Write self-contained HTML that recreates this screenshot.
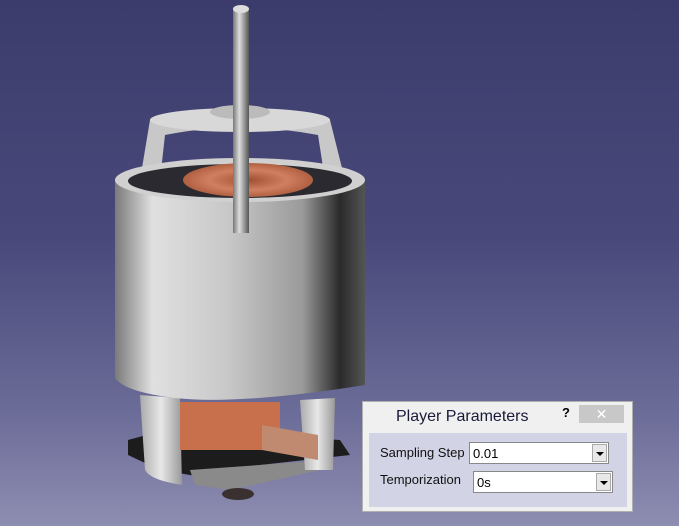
<!DOCTYPE html>
<html><head><style>
body{margin:0;width:679px;height:526px;overflow:hidden;background:linear-gradient(#3c3c6c 0%,#48487a 45%,#6e6e9a 80%,#8e8eb2 100%);font-family:"Liberation Sans",sans-serif;position:relative}
.dlg{position:absolute;left:362px;top:401px;width:271px;height:111px;background:#f0f0f0;border:1px solid #b0b0b0;box-sizing:border-box}
.title{position:absolute;left:33px;top:6px;font-size:16px;color:#1a1a3a}
.q{position:absolute;left:199px;top:3px;font-size:13px;font-weight:bold}
.x{position:absolute;left:216px;top:3px;width:45px;height:18px;background:#c8c8c8;color:#fff;text-align:center;font-size:14px;line-height:18px}
.body{position:absolute;left:6px;top:31px;width:258px;height:74px;background:#d3d3e6}
.lbl{position:absolute;font-size:13px;color:#111}
.cb{position:absolute;height:22px;background:#fff;border:1px solid #888;box-sizing:border-box;font-size:13px;padding:3px 0 0 3px}
.cb i{position:absolute;right:1px;top:1px;width:15px;height:18px;background:#e8e8e8;border:1px solid #aaa;box-sizing:border-box}
.cb i:after{content:"";position:absolute;left:3px;top:7px;border:4px solid transparent;border-top:4px solid #000}
</style></head><body>
<svg width="679" height="526" style="position:absolute;left:0;top:0">
<defs>
<linearGradient id="cyl" x1="0" x2="1"><stop offset="0" stop-color="#7a7a7a"/><stop offset=".15" stop-color="#e0e0e0"/><stop offset=".45" stop-color="#c8c8c8"/><stop offset=".75" stop-color="#9a9a9a"/><stop offset=".9" stop-color="#2a2a2a"/><stop offset="1" stop-color="#555"/></linearGradient>
<linearGradient id="lc" x1="0" x2="1"><stop offset="0" stop-color="#aaa"/><stop offset=".5" stop-color="#e8e8e8"/><stop offset="1" stop-color="#999"/></linearGradient>
<linearGradient id="sh" x1="0" x2="1"><stop offset="0" stop-color="#777"/><stop offset=".4" stop-color="#ddd"/><stop offset="1" stop-color="#555"/></linearGradient>
<radialGradient id="cu"><stop offset="0" stop-color="#a05030"/><stop offset=".6" stop-color="#d08060"/><stop offset="1" stop-color="#b06040"/></radialGradient>
</defs>
<!-- lower -->
<path d="M128 440 L165 430 L340 440 L350 455 L260 465 L220 480 L160 470 L128 455 Z" fill="#1c1c1c"/>
<path d="M190 470 L330 460 L320 470 L230 490 L195 485 Z" fill="#8a8a8a"/>
<ellipse cx="238" cy="494" rx="16" ry="6" fill="#3a3030"/>
<path d="M140 395 L180 398 L182 485 Q150 480 145 470 Z" fill="url(#lc)"/>
<path d="M300 400 L335 398 L333 470 L305 470 Z" fill="url(#lc)"/>
<rect x="180" y="402" width="100" height="48" fill="#c8704c"/>
<path d="M262 425 L318 435 L318 460 L262 450 Z" fill="#c08a70"/>
<!-- brackets -->
<path d="M140 180 L150 120 Q240 100 330 120 L345 180 L325 180 L318 135 Q240 120 165 135 L160 180 Z" fill="#c8c8c8"/>
<ellipse cx="240" cy="120" rx="90" ry="12" fill="#d8d8d8"/>
<ellipse cx="240" cy="112" rx="30" ry="7" fill="#bbb"/>
<!-- main cylinder -->
<path d="M115 180 L115 378 Q125 392 175 398 Q240 405 365 385 L365 180 Z" fill="url(#cyl)"/>
<ellipse cx="240" cy="180" rx="125" ry="22" fill="#d0d0d0"/>
<ellipse cx="240" cy="181" rx="112" ry="17" fill="#2a2a30"/>
<ellipse cx="248" cy="180" rx="65" ry="17" fill="url(#cu)"/>
<!-- shaft -->
<rect x="233" y="8" width="16" height="225" fill="url(#sh)"/>
<ellipse cx="241" cy="9" rx="8" ry="4" fill="#ddd"/>
</svg>
<div class="dlg">
<div class="title">Player Parameters</div><div class="q">?</div><div class="x">✕</div>
<div class="body">
<div class="lbl" style="left:11px;top:12px">Sampling Step</div>
<div class="cb" style="left:100px;top:9px;width:140px">0.01<i></i></div>
<div class="lbl" style="left:11px;top:39px">Temporization</div>
<div class="cb" style="left:104px;top:38px;width:140px">0s<i></i></div>
</div></div>
</body></html>
